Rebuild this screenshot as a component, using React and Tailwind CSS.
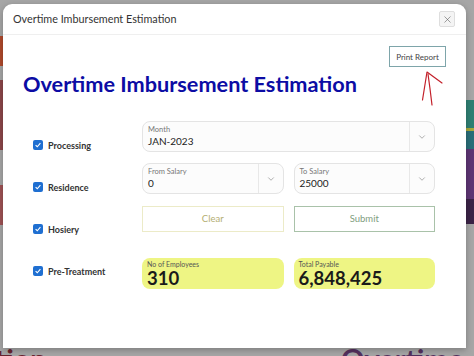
import React from 'react';
import { X, ChevronDown } from 'lucide-react';

const font = { fontFamily: 'Lato, "Open Sans", sans-serif' };

function Check({ label }) {
    return (
        <div className="flex h-[12px] items-center gap-[5px]">
            <span className="flex h-[10px] w-[10px] items-center justify-center rounded-[2px] bg-[#1f6fd1]">
                <svg viewBox="0 0 10 10" className="h-[8px] w-[8px]">
                    <path d="M2 5.2 L4.1 7.2 L8 2.8" fill="none" stroke="white" strokeWidth="1.4" />
                </svg>
            </span>
            <span className="text-[9px] font-bold leading-none text-[#333]">{label}</span>
        </div>
    );
}

function Select({ label, value, className = '' }) {
    return (
        <div className={`flex h-[31px] rounded-[8px] border border-[#e4e4e4] bg-[#fcfcfc] ${className}`}>
            <div className="flex flex-1 flex-col justify-center pl-[5px]">
                <span className="text-[7.5px] leading-[10px] text-[#777]">{label}</span>
                <span className="text-[10px] leading-[13px] text-[#222]">{value}</span>
            </div>
            <div className="flex w-[25px] items-center justify-center border-l border-[#e8e8e8]">
                <ChevronDown size={10} strokeWidth={1.4} className="text-[#777]" />
            </div>
        </div>
    );
}

function Stat({ label, value }) {
    return (
        <div className="flex h-[31px] flex-1 flex-col justify-center rounded-[8px] bg-[#eef584] pl-[5px]">
            <span className="text-[7px] leading-[9px] text-[#555]">{label}</span>
            <span className="text-[18.5px] font-bold leading-[19px] text-[#1a1a1a]">{value}</span>
        </div>
    );
}

export default function App() {
    return (
        <div className="relative h-[356px] w-[474px] overflow-hidden bg-[#a6a6a6]" style={font}>
            {/* Dimmed page behind the dialog */}
            <div className="flex h-full flex-col">
                <div className="flex flex-1">
                    <div className="flex w-[3px] flex-col">
                        <div className="mt-[36px] h-[30px] bg-[#b04a2c]" />
                        <div className="mt-[14px] h-[70px] bg-[#8c4649]" />
                        <div className="mt-[35px] h-[40px] bg-[#9e5254]" />
                    </div>
                    <div className="flex-1" />
                    <div className="flex w-[8px] flex-col">
                        <div className="mt-[100px] h-[28px] bg-[#2f7f73]" />
                        <div className="h-[3px] bg-[#a8a83a]" />
                        <div className="h-[18px] bg-[#2a6e78]" />
                        <div className="h-[50px] bg-[#5e3574]" />
                        <div className="h-[25px] bg-[#3b2346]" />
                    </div>
                </div>
                <div className="flex h-[10px] items-start justify-between overflow-hidden">
                    <span className="-mt-[2px] -ml-[5px] text-[29px] font-bold leading-[29px] text-[#6a2430]">tion</span>
                    <span className="-mt-[2px] mr-[10px] text-[29px] font-bold leading-[29px] text-[#54305e]">Overtime</span>
                </div>
            </div>

            {/* Dialog */}
            <div className="absolute left-[3px] top-[4px] flex h-[344px] w-[463px] flex-col rounded-t-[9px] bg-white shadow-[0_2px_6px_rgba(0,0,0,0.25)]">
                <div className="flex h-[31px] items-center justify-between border-b border-[#efefef] pl-[10px] pr-[11px]">
                    <span className="text-[10.8px] text-[#333]">Overtime Imbursement Estimation</span>
                    <button className="flex h-[16px] w-[16px] items-center justify-center rounded-[2px] border border-[#dedede] bg-[#f4f4f4]">
                        <X size={11} strokeWidth={1.2} className="text-[#555]" />
                    </button>
                </div>

                <div className="flex justify-end pr-[20px] pt-[11px]">
                    <button className="h-[21px] w-[57px] border border-[#7ea5aa] text-[8px] text-[#444]">
                        Print Report
                    </button>
                </div>

                <h1 className="mt-[3px] pl-[20px] text-[21.7px] font-bold leading-[28px] text-[#0c0ca4]">
                    Overtime Imbursement Estimation
                </h1>

                <div className="mt-[23px] flex pl-[30px]">
                    <div className="flex w-[109px] flex-col gap-[30px] pt-[18px]">
                        <Check label="Processing" />
                        <Check label="Residence" />
                        <Check label="Hosiery" />
                        <Check label="Pre-Treatment" />
                    </div>
                    <div className="flex w-[293px] flex-col">
                        <Select label="Month" value="JAN-2023" />
                        <div className="mt-[11px] flex gap-[10px]">
                            <Select label="From Salary" value="0" className="flex-1" />
                            <Select label="To Salary" value="25000" className="flex-1" />
                        </div>
                        <div className="mt-[12px] flex gap-[10px]">
                            <button className="h-[26px] flex-1 border border-[#ecebc8] text-[9.5px] text-[#b4ae72]">Clear</button>
                            <button className="h-[26px] flex-1 border border-[#a9c2a9] text-[9.5px] text-[#7f9e80]">Submit</button>
                        </div>
                        <div className="mt-[26px] flex gap-[10px]">
                            <Stat label="No of Employees" value="310" />
                            <Stat label="Total Payable" value="6,848,425" />
                        </div>
                    </div>
                </div>
            </div>

            {/* Hand-drawn arrow */}
            <svg className="absolute left-[415px] top-[66px] h-[44px] w-[32px]" viewBox="415 66 32 44">
                <path d="M422.5 100 L427 72 L442 83" fill="none" stroke="#c3202a" strokeWidth="1.2" strokeLinecap="round" strokeLinejoin="round" />
                <path d="M428 74 Q430 88 432 105" fill="none" stroke="#c3202a" strokeWidth="1.2" strokeLinecap="round" />
            </svg>
        </div>
    );
}
